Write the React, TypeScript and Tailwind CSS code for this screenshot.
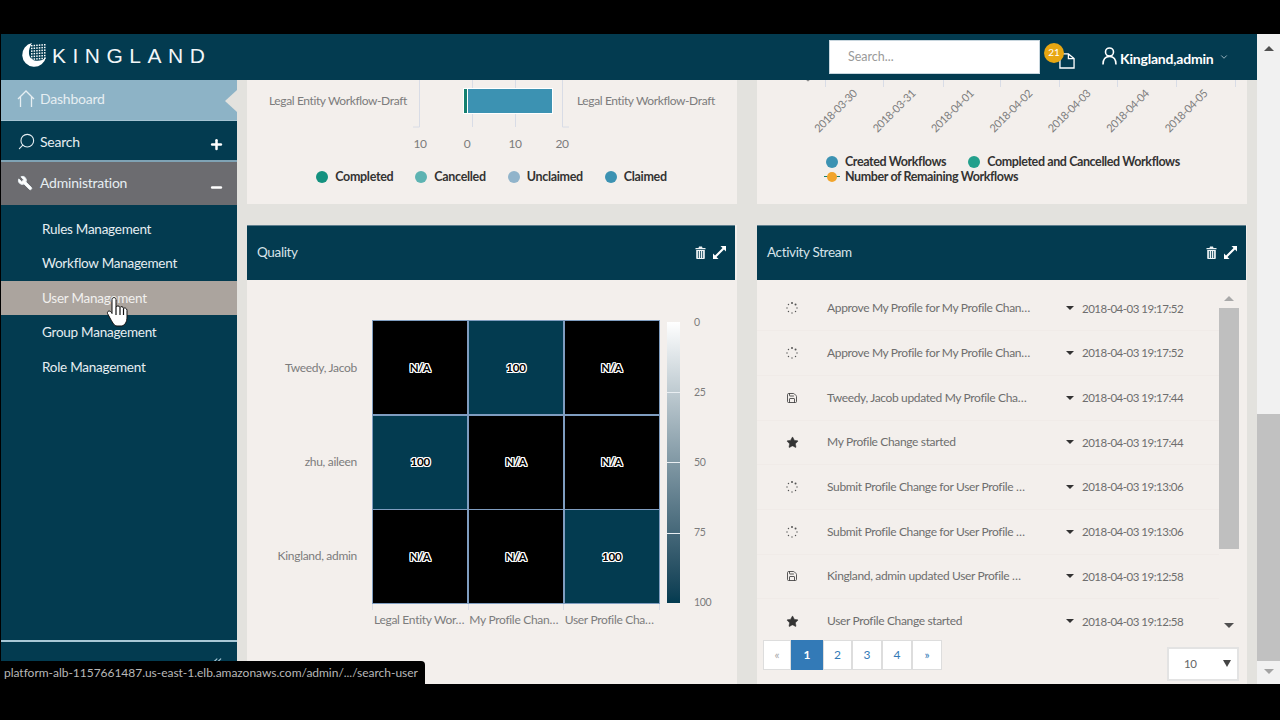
import { Search, Wrench, Plus, Minus, ChevronDown, ChevronsLeft, Save, Star } from "lucide-react";

const SUB_ITEMS = ["Rules Management", "Workflow Management", "User Management", "Group Management", "Role Management"];

const ACTIVITY = [
  { icon: "spin", text: "Approve My Profile for My Profile Chan…", date: "2018-04-03 19:17:52" },
  { icon: "spin", text: "Approve My Profile for My Profile Chan…", date: "2018-04-03 19:17:52" },
  { icon: "save", text: "Tweedy, Jacob updated My Profile Cha…", date: "2018-04-03 19:17:44" },
  { icon: "star", text: "My Profile Change started", date: "2018-04-03 19:17:44" },
  { icon: "spin", text: "Submit Profile Change for User Profile …", date: "2018-04-03 19:13:06" },
  { icon: "spin", text: "Submit Profile Change for User Profile …", date: "2018-04-03 19:13:06" },
  { icon: "save", text: "Kingland, admin updated User Profile …", date: "2018-04-03 19:12:58" },
  { icon: "star", text: "User Profile Change started", date: "2018-04-03 19:12:58" },
];

const HEAT_ROWS = [
  { name: "Tweedy, Jacob", cells: ["N/A", "100", "N/A"] },
  { name: "zhu, aileen", cells: ["100", "N/A", "N/A"] },
  { name: "Kingland, admin", cells: ["N/A", "N/A", "100"] },
];

const HEAT_COLUMNS = ["Legal Entity Wor…", "My Profile Chan…", "User Profile Cha…"];

const DATES = ["2018-03-30", "2018-03-31", "2018-04-01", "2018-04-02", "2018-04-03", "2018-04-04", "2018-04-05"];

function Logo() {
  const dots = [];
  for (let r = 0; r < 6; r++) {
    for (let c = 0; c < 6; c++) {
      dots.push(<rect key={`${r}-${c}`} x={10 + c * 2.6} y={3 + r * 2.7 - c * 0.2} width="1.5" height="1.5" fill="#fff" />);
    }
  }
  return (
    <svg width="26" height="26" viewBox="0 0 26 26">
      <path d="M11 1 A12 12 0 1 0 25 15 C20 21 9 20 8 12 C7.5 8 9 4 11 1 Z" fill="#fff" />
      {dots}
    </svg>
  );
}

function HomeOutline() {
  return (
    <svg width="18" height="18" viewBox="0 0 18 18" fill="none" stroke="#e6eef2" strokeWidth="1.3">
      <path d="M1 9L9 1L17 9M3.5 7V17M14.5 7V17" />
    </svg>
  );
}

function UserOutline() {
  return (
    <svg width="15" height="18" viewBox="0 0 15 18" fill="none" stroke="#fff" strokeWidth="1.6">
      <circle cx="7.5" cy="5" r="4" />
      <path d="M1 17.5C1 12.5 3.5 9.5 7.5 9.5S14 12.5 14 17.5" />
    </svg>
  );
}

function TrashGlyph() {
  return (
    <svg width="11" height="13" viewBox="0 0 11 13">
      <path d="M0.5 2H3.5L4 0.5H7L7.5 2H10.5V3.2H0.5Z M1.2 4H9.8V12.2Q9.8 13 9 13H2Q1.2 13 1.2 12.2Z" fill="#eef3f5" />
      <path d="M3.4 5V12M5.5 5V12M7.6 5V12" stroke="#033b50" strokeWidth="0.8" />
    </svg>
  );
}

function ResizeGlyph() {
  return (
    <svg width="13" height="13" viewBox="0 0 13 13" fill="#fff">
      <path d="M7.5 0H13V5.5L11 3.5L3.5 11L5.5 13H0V7.5L2 9.5L9.5 2Z" />
    </svg>
  );
}

function SpinnerDots() {
  const dots = [0, 1, 2, 3, 4, 5, 6, 7];
  return (
    <svg width="12" height="12" viewBox="0 0 12 12" fill="#555">
      {dots.map((i) => (
        <circle
          key={i}
          cx={6 + 5 * Math.sin((i * Math.PI) / 4)}
          cy={6 - 5 * Math.cos((i * Math.PI) / 4)}
          r={i === 0 || i === 1 ? 1 : 0.7}
        />
      ))}
    </svg>
  );
}

function NavRow({ label, icon, bg, sign }: { label: string; icon: React.ReactNode; bg: string; sign?: React.ReactNode }) {
  return (
    <div className={`flex items-center pl-[16px] pr-[13px] text-[14px] tracking-[-0.22px] text-[#e6eef2] ${bg}`}>
      <span className="w-[23px] shrink-0">{icon}</span>
      <span className="flex-1">{label}</span>
      {sign}
    </div>
  );
}

function Sidebar() {
  return (
    <aside className="relative flex w-[236px] shrink-0 flex-col overflow-hidden bg-[#033b50]">
      <div className="relative">
        <NavRow label="Dashboard" icon={<HomeOutline />} bg="h-[41px] pb-[3px] bg-[#8db3c6] border-b border-[#a5c4d3]" />
        <span className="absolute right-0 top-[10px] h-0 w-0 border-y-[11px] border-r-[12px] border-y-transparent border-r-[#e3e2de]" />
      </div>
      <NavRow
        label="Search"
        icon={<Search size={19} strokeWidth={1.4} className="-scale-x-100" />}
        bg="h-[41px] pt-[1px] border-b-2 border-[#7fa3b5]"
        sign={<Plus size={15} strokeWidth={4} className="translate-y-[3px] text-white" />}
      />
      <NavRow
        label="Administration"
        icon={<Wrench size={16} fill="#fff" strokeWidth={1.5} className="-scale-x-100" />}
        bg="h-[43px] pb-[2px] bg-[#6c6c70]"
        sign={<Minus size={15} strokeWidth={4} className="translate-y-[5px] text-white" />}
      />
      <div className="flex flex-col pt-[6.5px]">
        {SUB_ITEMS.map((item) => (
          <div
            key={item}
            className={`flex h-[34.5px] items-center pl-[41px] text-[13.5px] tracking-[-0.25px] ${item === "User Management" ? "bg-[#aba49e] text-[#f1f0ee]" : "text-[#e6eef2]"}`}
          >
            {item}
          </div>
        ))}
      </div>
      <div className="mt-auto flex h-[44px] justify-end border-t-2 border-[#a9c8d6] pr-[13px] pt-[13px] text-[#a9c8d6]">
        <ChevronsLeft size={13} strokeWidth={2} />
      </div>
    </aside>
  );
}

function BarChartCard() {
  return (
    <section className="h-[124px] w-[490px] overflow-hidden bg-[#f3efec]">
      <svg width="490" height="80" viewBox="0 0 490 80" fontSize="12" letterSpacing="-0.38" fill="#7c7c7c">
        <path d="M172.5 0V47H166M225.5 0V47M268.5 0V47M315.5 0V47H322" stroke="#d8dce6" fill="none" />
        <text x="22" y="25">Legal Entity Workflow-Draft</text>
        <text x="330" y="25">Legal Entity Workflow-Draft</text>
        <rect x="216" y="8" width="90" height="26" fill="#fff" />
        <rect x="217" y="9" width="3" height="24" fill="#14806f" />
        <rect x="221" y="9" width="84" height="24" fill="#3c92b2" />
        <text x="173" y="67.5" textAnchor="middle">10</text>
        <text x="220" y="67.5" textAnchor="middle">0</text>
        <text x="268" y="67.5" textAnchor="middle">10</text>
        <text x="315" y="67.5" textAnchor="middle">20</text>
      </svg>
      <div className="flex justify-center gap-[22px] pr-[1px] pt-[8px] text-[12.5px] font-bold tracking-[-0.32px] text-[#333]">
        <Legend color="bg-[#14917f]" label="Completed" />
        <Legend color="bg-[#5db3b2]" label="Cancelled" />
        <Legend color="bg-[#91b4cb]" label="Unclaimed" />
        <Legend color="bg-[#3c92b2]" label="Claimed" />
      </div>
    </section>
  );
}

function Legend({ color, label }: { color: string; label: string }) {
  return (
    <div className="flex items-center gap-[7px]">
      <span className={`h-[12px] w-[12px] rounded-full ${color}`} />
      {label}
    </div>
  );
}

function TrendCard() {
  return (
    <section className="h-[124px] w-[490px] overflow-hidden bg-[#f3efec]">
      <svg width="490" height="62" viewBox="0 0 490 62" fontSize="11" letterSpacing="-0.45" fill="#7c7c7c">
        <path d="M68.5 0V7M126.5 0V7M186.5 0V7M243.5 0V7M302.5 0V7M360.5 0V7M419.5 0V7M478.5 0V7" stroke="#d8dce6" fill="none" />
        <path d="M49.5 0Q51 2 52.5 0" stroke="#7c7c7c" fill="none" />
        {DATES.map((date, i) => (
          <text key={date} transform={`translate(${62 + i * 58.4} 53) rotate(-45)`}>
            {date}
          </text>
        ))}
      </svg>
      <div className="pl-[68px] pt-[12px] text-[12.5px] font-bold leading-[15px] tracking-[-0.4px] text-[#333]">
        <div className="flex items-center">
          <span className="ml-[1px] mr-[7px] h-[12px] w-[12px] rounded-full bg-[#3c92b2]" />
          Created Workflows
          <span className="ml-[22px] mr-[7px] h-[12px] w-[12px] rounded-full bg-[#23a08c]" />
          Completed and Cancelled Workflows
        </div>
        <div className="flex items-center">
          <span className="relative -ml-[1px] mr-[5px] flex h-[12px] w-[16px] items-center justify-center">
            <span className="h-[1px] w-[16px] bg-[#14806f]" />
            <span className="absolute h-[10px] w-[10px] rounded-full bg-[#f2a52c]" />
          </span>
          Number of Remaining Workflows
        </div>
      </div>
    </section>
  );
}

function CardHeader({ title, inset }: { title: string; inset: string }) {
  return (
    <div className={`flex h-[55px] shrink-0 items-center justify-between border-t border-[#5f7f8e] bg-[#033b50] pb-[2px] pl-[10px] pr-[9px] text-[13.5px] tracking-[-0.35px] text-[#d7e3e9] ${inset}`}>
      {title}
      <div className="flex items-center gap-[7px]">
        <TrashGlyph />
        <ResizeGlyph />
      </div>
    </div>
  );
}

function Outlined({ children }: { children: string }) {
  return (
    <span className="text-[11.5px] font-bold tracking-[-0.2px] text-black [text-shadow:1px_0_0_#fff,-1px_0_0_#fff,0_1px_0_#fff,0_-1px_0_#fff,1px_1px_0_#fff,-1px_-1px_0_#fff,1px_-1px_0_#fff,-1px_1px_0_#fff]">
      {children}
    </span>
  );
}

function QualityCard() {
  return (
    <section className="flex h-[459px] w-[490px] flex-col overflow-hidden bg-[#f3efec]">
      <CardHeader title="Quality" inset="mr-[2px]" />
      <div className="flex pt-[40px] text-[12px] tracking-[-0.3px] text-[#7c7c7c]">
        <div className="flex w-[110px] shrink-0 translate-y-[1px] flex-col text-right">
          {HEAT_ROWS.map((row) => (
            <div key={row.name} className="flex h-[94px] items-center justify-end">
              {row.name}
            </div>
          ))}
        </div>
        <div className="ml-[15px] w-[288px] shrink-0">
          <div className="grid grid-cols-3 gap-[1.5px] border border-[#7f9dc0] bg-[#7f9dc0]">
            {HEAT_ROWS.flatMap((row) =>
              row.cells.map((cell, i) => (
                <div
                  key={row.name + i}
                  className={`flex h-[93px] items-center justify-center ${cell === "N/A" ? "bg-black" : "bg-[#033b50]"}`}
                >
                  <Outlined>{cell}</Outlined>
                </div>
              )),
            )}
          </div>
          <div className="grid h-[6px] grid-cols-3 border-r border-[#d8dce6]">
            <span className="border-l border-[#d8dce6]" />
            <span className="border-l border-[#d8dce6]" />
            <span className="border-l border-[#d8dce6]" />
          </div>
          <div className="grid grid-cols-3 pl-[2px] pt-[1px] text-[12px] whitespace-nowrap">
            {HEAT_COLUMNS.map((column) => (
              <span key={column}>{column}</span>
            ))}
          </div>
        </div>
        <div className="ml-[7px] flex h-[281px] w-[13px] shrink-0 translate-y-[2px] flex-col justify-evenly bg-gradient-to-b from-white to-[#033b50]">
          <span className="h-[1px] bg-[#e9eef2]" />
          <span className="h-[1px] bg-[#e9eef2]" />
          <span className="h-[1px] bg-[#e9eef2]" />
        </div>
        <div className="ml-[14px] flex h-[296px] -translate-y-[5px] flex-col justify-between text-[10.5px]">
          <span>0</span>
          <span>25</span>
          <span>50</span>
          <span>75</span>
          <span>100</span>
        </div>
      </div>
    </section>
  );
}

function ActivityIcon({ kind }: { kind: string }) {
  if (kind === "save") return <Save size={12} strokeWidth={1.75} className="text-[#444]" />;
  if (kind === "star") return <Star size={13} fill="#333" strokeWidth={1} className="text-[#333]" />;
  return <SpinnerDots />;
}

function ActivityCard() {
  return (
    <section className="flex h-[459px] w-[490px] flex-col overflow-hidden bg-[#f3efec]">
      <CardHeader title="Activity Stream" inset="mr-[1px]" />
      <div className="flex h-[360px] pt-[6.5px]">
        <div className="w-[462px] overflow-hidden">
          {ACTIVITY.map((row, i) => (
            <div key={i} className="flex h-[44.7px] items-center border-b border-[#f0ebe8] text-[12px] tracking-[-0.35px] text-[#6e6e6e]">
              <span className="flex w-[70px] justify-center">
                <ActivityIcon kind={row.icon} />
              </span>
              <span className="w-[239px] whitespace-nowrap">{row.text}</span>
              <span className="h-0 w-0 border-x-[4px] border-t-[4px] border-x-transparent border-t-[#333]" />
              <span className="ml-[8px] text-[11.5px] tracking-[-0.5px]">{row.date}</span>
            </div>
          ))}
        </div>
        <div className="flex w-[20px] flex-col items-center">
          <span className="mt-[9.5px] h-0 w-0 border-x-[5px] border-b-[5px] border-x-transparent border-b-[#a9a9a9]" />
          <span className="mt-[7px] h-[241px] w-[20px] bg-[#bfbfbf]" />
          <span className="mt-[74px] h-0 w-0 border-x-[5px] border-t-[5px] border-x-transparent border-t-[#505050]" />
        </div>
      </div>
      <div className="flex items-start justify-between pl-[6px] pr-[8px]">
        <div className="flex h-[30px] text-[12px] text-[#337ab7]">
          <span className="flex w-[28px] items-center justify-center border border-[#ddd] bg-white text-[#aaa]">«</span>
          <span className="flex w-[32px] items-center justify-center bg-[#337ab7] font-bold text-white">1</span>
          <span className="flex w-[29px] items-center justify-center border border-[#ddd] bg-white">2</span>
          <span className="flex w-[30px] items-center justify-center border border-[#ddd] bg-white">3</span>
          <span className="flex w-[30px] items-center justify-center border border-[#ddd] bg-white">4</span>
          <span className="flex w-[30px] items-center justify-center border border-[#ddd] bg-white">»</span>
        </div>
        <div className="mt-[7px] flex h-[34px] w-[72px] items-center justify-between border-2 border-[#e3e3e3] bg-white pl-[15px] pr-[6px] text-[11.5px] tracking-[-0.3px] text-[#666]">
          10
          <span className="h-0 w-0 -translate-y-[1px] border-x-[4px] border-t-[7px] border-x-transparent border-t-[#444]" />
        </div>
      </div>
    </section>
  );
}

function HandCursor() {
  return (
    <svg className="absolute left-[106px] top-[296px]" width="24" height="32" viewBox="0 0 24 32">
      <path
        d="M6 3.5 C6 1 10 1 10 3.5 V11 C10.5 9.5 13.5 9.5 14 11.5 C14.5 10 17.5 10.5 17.5 12.5 C18.5 11.5 21 12 21 14.5 V21 C21 26 19 29 16 30 H11 C8 30 7 27 4.5 23 L1.5 17.5 C1 15 3.5 14 5.5 16.5 L6 17.5 Z"
        fill="#fff"
        stroke="#111"
        strokeWidth="1"
      />
      <path d="M10 11V19M14 11.5V19M17.5 12.5V19" stroke="#111" strokeWidth="1.2" fill="none" />
    </svg>
  );
}

export default function App() {
  return (
    <div className="relative flex h-[720px] w-[1280px] flex-col overflow-hidden bg-black font-['Lato','Liberation_Sans',sans-serif]">
      <div className="h-[34px] shrink-0" />
      <div className="flex h-[650px] shrink-0 pl-[1px]">
        <div className="flex w-[1256px] flex-col">
          <header className="flex h-[46px] shrink-0 items-center bg-[#033b50] pl-[20px] text-white">
            <span className="-translate-y-[2px]">
              <Logo />
            </span>
            <span className="ml-[5px] -translate-y-[2px] font-['Liberation_Sans',sans-serif] text-[21px] leading-none tracking-[6.5px] text-[#f2f6f8]">KINGLAND</span>
            <div className="ml-auto flex h-[34px] w-[211px] items-center border border-[#c8d6de] bg-white pl-[18px] pt-[1px] text-[12.5px] text-[#9a9a9a]">
              Search...
            </div>
            <div className="relative ml-[19px] mt-[6px] h-[17px] w-[16px]">
              <svg width="16" height="17" viewBox="0 0 17 18" fill="none" stroke="#fff" strokeWidth="1.4">
                <path d="M1 17V2H10L16 7V17Z" />
                <path d="M10 2V7H16" />
              </svg>
              <span className="absolute -left-[15px] -top-[9px] flex h-[20px] w-[20px] items-center justify-center rounded-full bg-[#e8a712] text-[10px] text-white">
                21
              </span>
            </div>
            <span className="ml-[27px] -translate-y-[1px]">
              <UserOutline />
            </span>
            <span className="ml-[3px] w-[93px] translate-y-[1px] whitespace-nowrap text-[14px] font-bold tracking-[-0.2px]">Kingland,admin</span>
            <ChevronDown size={10} className="ml-[6px] mr-[28px] text-[#b5c8d1]" />
          </header>
          <div className="flex min-h-0 flex-1">
            <Sidebar />
            <main className="grid flex-1 grid-cols-[490px_490px] content-start gap-x-[20px] gap-y-[21px] overflow-hidden bg-[#e3e2de] pl-[10px]">
              <BarChartCard />
              <TrendCard />
              <QualityCard />
              <ActivityCard />
            </main>
          </div>
        </div>
        <div className="flex w-[23px] flex-col items-center bg-[#f1f1f1]">
          <span className="mt-[12px] h-0 w-0 border-x-[5px] border-b-[5px] border-x-transparent border-b-[#505050]" />
          <span className="mt-[363px] h-[247px] w-full bg-[#c1c1c1]" />
          <span className="mt-[8px] h-0 w-0 border-x-[5px] border-t-[5px] border-x-transparent border-t-[#a3a3a3]" />
        </div>
      </div>
      <HandCursor />
      <div className="absolute left-0 top-[661px] flex h-[23px] w-[425px] items-center rounded-tr-[4px] bg-black pl-[4px] pt-[1px] text-[12px] tracking-[-0.03px] text-[#b8b8b8]">
        platform-alb-1157661487.us-east-1.elb.amazonaws.com/admin/.../search-user
      </div>
    </div>
  );
}
